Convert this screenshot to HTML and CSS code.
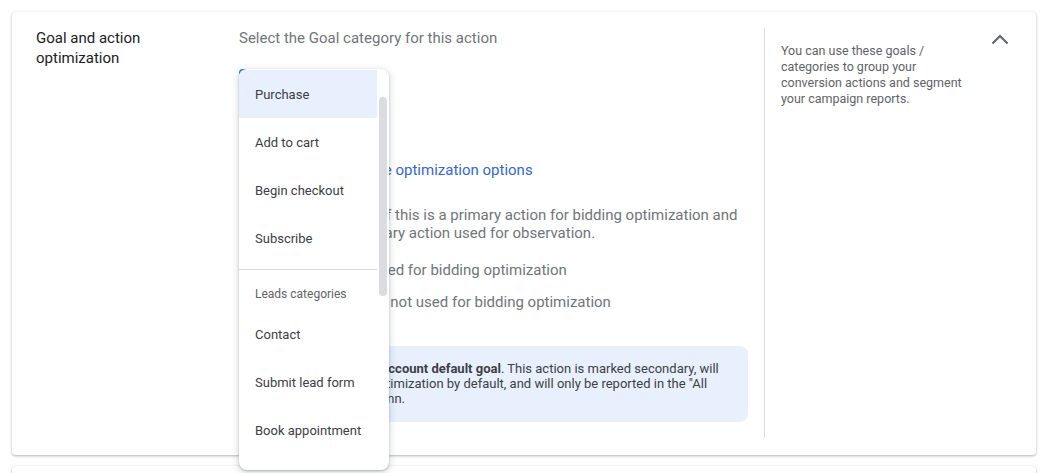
FILE: index.html
```html
<!DOCTYPE html>
<html lang="en">
<head>
<meta charset="utf-8">
<title>Goal and action optimization</title>
<link rel="stylesheet" href="styles.css">
</head>
<body>
<section class="card">
  <div class="label">Goal and action<br>optimization</div>
  <div class="main">
    <div class="title">Select the Goal category for this action</div>
    <div class="field"></div>
    <div class="link">Show conversion value optimization options</div>
    <p class="para">Here you can choose if this is a primary action for bidding optimization and<br>whether it is a secondary action used for observation.</p>
    <div class="radios">
      <div class="radio-row"><span class="radio"></span><span>Primary action used for bidding optimization</span></div>
      <div class="radio-row"><span class="radio"></span><span>Secondary action not used for bidding optimization</span></div>
    </div>
    <div class="info">This is not in any <b>account default goal</b>. This action is marked secondary, will<br>not be used for optimization by default, and will only be reported in the "All<br>conversions" column.</div>

    <div class="menu">
      <div class="menu-list">
        <div class="item selected">Purchase</div>
        <div class="item">Add to cart</div>
        <div class="item">Begin checkout</div>
        <div class="item">Subscribe</div>
        <div class="divider"></div>
        <div class="group">Leads categories</div>
        <div class="item">Contact</div>
        <div class="item">Submit lead form</div>
        <div class="item">Book appointment</div>
      </div>
      <div class="thumb"></div>
    </div>
  </div>
  <div class="side">
    <p class="side-text">You can use these goals / categories to group your conversion actions and segment your campaign reports.</p>
    <svg class="chevron" width="24" height="24" viewBox="0 0 24 24"><path d="M4.5 16.5L12 9l7.5 7.5" fill="none" stroke="#5f6368" stroke-width="2"/></svg>
  </div>
</section>
<section class="card card-next"></section>
</body>
</html>
```
FILE: styles.css
```css
* { box-sizing: border-box; }
html, body { margin: 0; padding: 0; background: #ffffff; }
body { font-family: Roboto, "Noto Sans", Arial, sans-serif; color: #202124; overflow: hidden; }

.card {
  display: flex;
  margin: 12px 7px 0 12px;
  padding: 16px 24px 17px 24px;
  background: #fff;
  border-radius: 4px;
  box-shadow: 0 1px 2px rgba(60,64,67,.25), 0 1px 3px 1px rgba(60,64,67,.10);
}
.card-next { height: 40px; margin-top: 11px; padding: 0; }

.label {
  flex: 0 0 203px;
  font-size: 15px;
  line-height: 20px;
  color: #202124;
}

.main {
  flex: 0 0 509px;
  position: relative;
  padding-bottom: 16px;
}
.title { font-size: 15px; line-height: 20px; color: #70757a; }
.field {
  margin-top: 21px;
  width: 140px;
  height: 56px;
  border: 2px solid #1a73e8;
  border-radius: 4px;
}
.link { margin-top: 35px; font-size: 15px; line-height: 20px; color: #3367d6; }
.para { margin: 26px 0 0; font-size: 15px; line-height: 18px; color: #70757a; }
.radios { margin-top: 12px; }
.radio-row {
  display: flex;
  align-items: center;
  height: 32px;
  font-size: 15px;
  color: #70757a;
}
.radio {
  width: 18px; height: 18px;
  margin: 0 12px 0 2px;
  border: 2px solid #5f6368;
  border-radius: 50%;
}
.info {
  margin-top: 28px;
  padding: 15px 16px 16px 42px;
  background: #e8f0fe;
  border-radius: 8px;
  font-size: 13px;
  line-height: 15px;
  color: #3c4043;
}
.info b { font-weight: 700; color: #3c4043; }

.menu {
  position: absolute;
  left: 0;
  top: 41px;
  width: 150px;
  height: 401px;
  background: #fff;
  border-radius: 8px;
  overflow: hidden;
  z-index: 10;
  box-shadow: 0 1px 2px rgba(60,64,67,.3), 0 2px 6px 2px rgba(60,64,67,.15);
}
.menu-list { width: 138px; padding-top: 1px; }
.item {
  display: flex;
  align-items: center;
  height: 48px;
  padding-left: 16px;
  font-size: 13px;
  color: #3c4043;
}
.item.selected { background: #e8f0fe; }
.divider { margin-top: 7px; height: 1px; background: #dadce0; }
.group {
  padding: 16px 16px 8px;
  font-size: 12px;
  line-height: 16px;
  color: #5f6368;
}
.thumb {
  position: absolute;
  right: 2px;
  top: 28px;
  width: 8px;
  height: 199px;
  border-radius: 4px;
  background: #dadce0;
}

.side {
  flex: 1;
  display: flex;
  align-items: flex-start;
  margin-left: 16px;
  padding-left: 16px;
  border-left: 1px solid #dadce0;
}
.side-text {
  width: 192px;
  margin: 15px 0 0;
  font-size: 12.5px;
  line-height: 16px;
  color: #5f6368;
}
.chevron { margin-left: auto; margin-top: -1px; flex: none; }
```
